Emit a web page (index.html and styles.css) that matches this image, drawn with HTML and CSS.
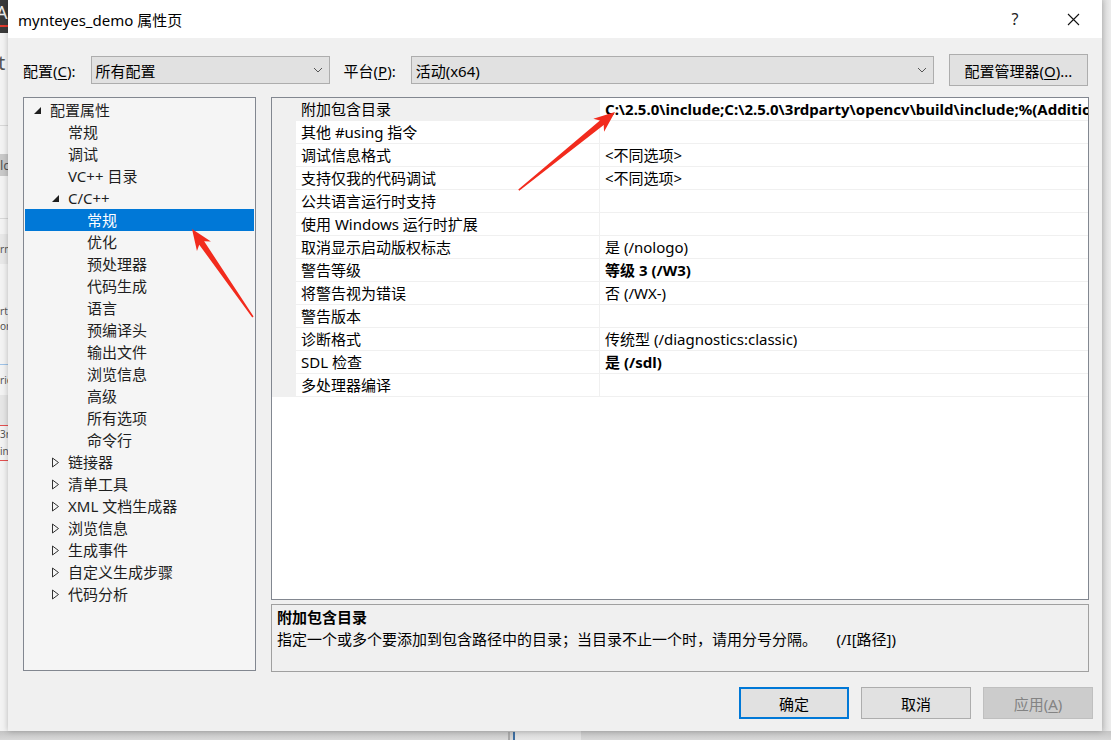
FILE: index.html
```html
<!DOCTYPE html>
<html lang="zh-CN">
<head>
    <meta charset="UTF-8">
    <title>mynteyes_demo 属性页</title>
    <link rel="stylesheet" href="styles.css">
</head>
<body>

<div class="desk">
    <div class="backwin">
        <div class="bw-top">A</div>
        <div class="bw-red"></div>
        <div class="bw-dark"></div>
        <div class="bw-pane">t</div>
        <div class="bw-line"></div>
        <div class="bw-sel">lc</div>
        <div class="bw-gap"></div>
        <div class="bw-line"></div>
        <div class="bw-band">rm</div>
        <div class="bw-gap2">rt<br>on</div>
        <div class="bw-blue">rie</div>
        <div class="bw-band2"></div>
        <div class="bw-redbox">3r<br>ine</div>
        <div class="bw-rest"></div>
    </div>

    <div class="dialog">
        <div class="titlebar">
            <span class="title">mynteyes_demo 属性页</span>
            <span class="tb-btn">?</span>
            <span class="tb-btn">
                <svg width="13" height="13" viewBox="0 0 13 13"><path d="M1 1 L12 12 M12 1 L1 12" stroke="#111" stroke-width="1.1" fill="none"/></svg>
            </span>
        </div>

        <div class="toolbar">
            <span class="lbl">配置(<u>C</u>):</span>
            <div class="combo combo-config">
                <span>所有配置</span>
                <svg class="chev" width="10" height="6" viewBox="0 0 10 6"><polyline points="1,1 5,5 9,1" fill="none" stroke="#555" stroke-width="1"/></svg>
            </div>
            <span class="lbl lbl-platform">平台(<u>P</u>):</span>
            <div class="combo combo-platform">
                <span>活动(x64)</span>
                <svg class="chev" width="10" height="6" viewBox="0 0 10 6"><polyline points="1,1 5,5 9,1" fill="none" stroke="#555" stroke-width="1"/></svg>
            </div>
            <button class="btn btn-mgr">配置管理器(<u>O</u>)...</button>
        </div>

        <div class="main">
            <div class="tree">
                <div class="node l0"><span class="twisty"><svg width="9" height="9" viewBox="0 0 9 9"><polygon points="8,1 8,8 1,8" fill="#1e1e1e"/></svg></span>配置属性</div>
                <div class="node l1"><span class="twisty"></span>常规</div>
                <div class="node l1"><span class="twisty"></span>调试</div>
                <div class="node l1"><span class="twisty"></span>VC++ 目录</div>
                <div class="node l1"><span class="twisty"><svg width="9" height="9" viewBox="0 0 9 9"><polygon points="8,1 8,8 1,8" fill="#1e1e1e"/></svg></span>C/C++</div>
                <div class="node l2 selected"><span class="twisty"></span>常规</div>
                <div class="node l2"><span class="twisty"></span>优化</div>
                <div class="node l2"><span class="twisty"></span>预处理器</div>
                <div class="node l2"><span class="twisty"></span>代码生成</div>
                <div class="node l2"><span class="twisty"></span>语言</div>
                <div class="node l2"><span class="twisty"></span>预编译头</div>
                <div class="node l2"><span class="twisty"></span>输出文件</div>
                <div class="node l2"><span class="twisty"></span>浏览信息</div>
                <div class="node l2"><span class="twisty"></span>高级</div>
                <div class="node l2"><span class="twisty"></span>所有选项</div>
                <div class="node l2"><span class="twisty"></span>命令行</div>
                <div class="node l1"><span class="twisty"><svg width="9" height="11" viewBox="0 0 9 11"><polygon points="1.5,1 7.5,5.5 1.5,10" fill="none" stroke="#333" stroke-width="1"/></svg></span>链接器</div>
                <div class="node l1"><span class="twisty"><svg width="9" height="11" viewBox="0 0 9 11"><polygon points="1.5,1 7.5,5.5 1.5,10" fill="none" stroke="#333" stroke-width="1"/></svg></span>清单工具</div>
                <div class="node l1"><span class="twisty"><svg width="9" height="11" viewBox="0 0 9 11"><polygon points="1.5,1 7.5,5.5 1.5,10" fill="none" stroke="#333" stroke-width="1"/></svg></span>XML 文档生成器</div>
                <div class="node l1"><span class="twisty"><svg width="9" height="11" viewBox="0 0 9 11"><polygon points="1.5,1 7.5,5.5 1.5,10" fill="none" stroke="#333" stroke-width="1"/></svg></span>浏览信息</div>
                <div class="node l1"><span class="twisty"><svg width="9" height="11" viewBox="0 0 9 11"><polygon points="1.5,1 7.5,5.5 1.5,10" fill="none" stroke="#333" stroke-width="1"/></svg></span>生成事件</div>
                <div class="node l1"><span class="twisty"><svg width="9" height="11" viewBox="0 0 9 11"><polygon points="1.5,1 7.5,5.5 1.5,10" fill="none" stroke="#333" stroke-width="1"/></svg></span>自定义生成步骤</div>
                <div class="node l1"><span class="twisty"><svg width="9" height="11" viewBox="0 0 9 11"><polygon points="1.5,1 7.5,5.5 1.5,10" fill="none" stroke="#333" stroke-width="1"/></svg></span>代码分析</div>
            </div>

            <div class="right">
                <div class="grid">
                    <div class="row current"><span class="gut"></span><span class="name">附加包含目录</span><span class="val bold">C:\2.5.0\include;C:\2.5.0\3rdparty\opencv\build\include;%(AdditionalIncludeDirectories)</span></div>
                    <div class="row"><span class="gut"></span><span class="name">其他 #using 指令</span><span class="val"></span></div>
                    <div class="row"><span class="gut"></span><span class="name">调试信息格式</span><span class="val">&lt;不同选项&gt;</span></div>
                    <div class="row"><span class="gut"></span><span class="name">支持仅我的代码调试</span><span class="val">&lt;不同选项&gt;</span></div>
                    <div class="row"><span class="gut"></span><span class="name">公共语言运行时支持</span><span class="val"></span></div>
                    <div class="row"><span class="gut"></span><span class="name">使用 Windows 运行时扩展</span><span class="val"></span></div>
                    <div class="row"><span class="gut"></span><span class="name">取消显示启动版权标志</span><span class="val">是 (/nologo)</span></div>
                    <div class="row"><span class="gut"></span><span class="name">警告等级</span><span class="val bold">等级 3 (/W3)</span></div>
                    <div class="row"><span class="gut"></span><span class="name">将警告视为错误</span><span class="val">否 (/WX-)</span></div>
                    <div class="row"><span class="gut"></span><span class="name">警告版本</span><span class="val"></span></div>
                    <div class="row"><span class="gut"></span><span class="name">诊断格式</span><span class="val">传统型 (/diagnostics:classic)</span></div>
                    <div class="row"><span class="gut"></span><span class="name">SDL 检查</span><span class="val bold">是 (/sdl)</span></div>
                    <div class="row"><span class="gut"></span><span class="name">多处理器编译</span><span class="val"></span></div>
                </div>
                <div class="desc">
                    <div class="desc-title">附加包含目录</div>
                    <div class="desc-text">指定一个或多个要添加到包含路径中的目录；当目录不止一个时，请用分号分隔。&nbsp;&nbsp;&nbsp;&nbsp;&nbsp;(/I[路径])</div>
                </div>
            </div>
        </div>

        <div class="footer">
            <button class="btn btn-ok">确定</button>
            <button class="btn">取消</button>
            <button class="btn btn-disabled">应用(<u>A</u>)</button>
        </div>
    </div>

    <div class="rshadow"></div>
</div>
<div class="floor">
    <div class="floor-a"></div>
    <div class="floor-b"></div>
    <div class="floor-c"></div>
</div>

<svg class="arrows" width="1111" height="740" viewBox="0 0 1111 740">
    <polygon transform="translate(192,229) rotate(55.3)" points="0,0 21,-8.5 17,-3 107,-0.8 107,0.8 17,3 21,8.5" fill="#f22b1d"/>
    <polygon transform="translate(615,112) rotate(140.9)" points="0,0 21,-8.5 17,-3 124,-0.8 124,0.8 17,3 21,8.5" fill="#f22b1d"/>
</svg>

</body>
</html>
```

FILE: styles.css
```css
body {
    margin: 0;
    width: 1111px;
    height: 740px;
    overflow: hidden;
    background-color: #d6d6d6;
    font-family: "Noto Sans", "Noto Sans CJK SC", sans-serif;
    font-size: 15px;
    color: #000;
    position: relative;
}
.desk {
    display: flex;
    height: 731px;
}

/* window behind the dialog */
.backwin {
    width: 8px;
    overflow: hidden;
    background-color: #f3f3f3;
    font-size: 13px;
    line-height: 13px;
    color: #555;
    white-space: nowrap;
}
.bw-top {
    height: 25px;
    background-color: #3a3a3a;
    color: #eee;
    font-size: 18px;
    line-height: 25px;
    text-indent: -4px;
}
.bw-red { height: 2px; background-color: #e03a2e; }
.bw-dark { height: 6px; background-color: #3a3a3a; }
.bw-pane {
    height: 92px;
    font-size: 20px;
    line-height: 60px;
    text-indent: -2px;
}
.bw-line { height: 1px; background-color: #d8d8d8; }
.bw-sel {
    height: 22px;
    margin-top: 28px;
    background-color: #c9c9c9;
    line-height: 22px;
}
.bw-gap { height: 42px; }
.bw-band {
    height: 30px;
    margin-top: 15px;
    background-color: #e8e8e8;
    line-height: 30px;
    font-size: 10px;
}
.bw-gap2 {
    height: 60px;
    padding-top: 40px;
    font-size: 10px;
    line-height: 15px;
}
.bw-blue {
    height: 30px;
    border-top: 1px solid #9ec3e8;
    font-size: 10px;
    line-height: 30px;
}
.bw-band2 { height: 30px; background-color: #e6e6e6; }
.bw-redbox {
    height: 34px;
    border-top: 1px solid #e35050;
    border-bottom: 1px solid #e35050;
    font-size: 10px;
    line-height: 17px;
}
.bw-rest { height: 200px; }

/* dialog */
.dialog {
    width: 1094px;
    height: 731px;
    background-color: #f0f0f0;
    display: flex;
    flex-direction: column;
    box-shadow: 0 0 6px rgba(0, 0, 0, 0.25);
    position: relative;
    z-index: 1;
}
.rshadow {
    flex: 1;
    background: linear-gradient(to right, #d9d9d9, #ececec);
}
.floor {
    height: 9px;
    display: flex;
    background: linear-gradient(#c4c4c4, #d8d8d8);
}
.floor-a { width: 508px; }
.floor-b {
    width: 3px;
    margin-top: 1px;
    border-left: 2px solid #a8a8a8;
    border-right: 2px solid #3d6da0;
}
.floor-c {
    width: 66px;
    background: linear-gradient(#d8d8d8, #e6e6e6);
}

.titlebar {
    height: 38px;
    background-color: #fff;
    display: flex;
    align-items: center;
    padding-left: 10px;
}
.title {
    flex: 1;
    font-size: 15px;
}
.tb-btn {
    width: 58px;
    height: 38px;
    display: flex;
    align-items: center;
    justify-content: center;
    font-size: 16px;
    color: #222;
}

.toolbar {
    display: flex;
    align-items: center;
    height: 32px;
    margin-top: 16px;
    padding: 0 14px 0 15px;
}
.lbl {
    white-space: nowrap;
}
.lbl u, .btn u {
    text-decoration-thickness: 1px;
    text-underline-offset: 2px;
}
.lbl-platform {
    margin-left: 14px;
}
.combo {
    height: 28px;
    box-sizing: border-box;
    border: 1px solid #adadad;
    background-color: #e1e1e1;
    display: flex;
    align-items: center;
    padding: 0 6px 0 4px;
    margin-left: 15px;
}
.combo .chev {
    margin-left: auto;
}
.combo-config {
    width: 239px;
}
.combo-platform {
    flex: 1;
}
.btn {
    height: 32px;
    width: 110px;
    box-sizing: border-box;
    border: 1px solid #adadad;
    background-color: #e1e1e1;
    font-family: inherit;
    font-size: 15px;
    color: #000;
    padding: 0;
}
.btn-mgr {
    width: 139px;
    margin-left: 15px;
}

.main {
    display: flex;
    gap: 15px;
    height: 575px;
    margin-top: 11px;
    padding: 0 13px 0 15px;
}

/* tree */
.tree {
    width: 233px;
    height: 574px;
    box-sizing: border-box;
    border: 1px solid #828790;
    background-color: #f5f5f5;
    padding: 1px;
    color: #1e1e1e;
}
.node {
    height: 22px;
    line-height: 22px;
    display: flex;
    align-items: center;
    white-space: nowrap;
}
.node.l0 { padding-left: 8px; }
.node.l1 { padding-left: 26px; }
.node.l2 { padding-left: 45px; }
.twisty {
    width: 17px;
    height: 22px;
    display: flex;
    align-items: center;
    flex-shrink: 0;
}
.node.selected {
    background-color: #0078d7;
    color: #fff;
}

/* property grid */
.right {
    flex: 1;
    display: flex;
    flex-direction: column;
    gap: 4px;
}
.grid {
    height: 503px;
    box-sizing: border-box;
    border: 1px solid #828790;
    background-color: #fff;
}
.row {
    display: grid;
    grid-template-columns: 24px 304px 1fr;
    height: 23px;
    line-height: 22px;
}
.gut {
    background-color: #f0f0f0;
}
.name, .val {
    box-sizing: border-box;
    border-bottom: 1px solid #f0f0f0;
    white-space: nowrap;
    overflow: hidden;
}
.name {
    padding-left: 5px;
    border-right: 1px solid #f0f0f0;
}
.val {
    padding-left: 5px;
}
.row.current .name {
    background-color: #f0f0f0;
}
.bold {
    font-weight: bold;
}

.desc {
    height: 68px;
    box-sizing: border-box;
    border: 1px solid #a0a0a0;
    background-color: #f0f0f0;
    padding: 1px 5px 0;
    line-height: 22px;
}
.desc-title {
    font-weight: bold;
}
.desc-text {
    white-space: nowrap;
}

/* bottom buttons */
.footer {
    display: flex;
    justify-content: flex-end;
    gap: 12px;
    padding: 15px 9px 0 0;
}
.btn-ok {
    border: 2px solid #0078d7;
}
.btn-disabled {
    background-color: #cccccc;
    border-color: #bfbfbf;
    color: #838383;
}

.arrows {
    position: absolute;
    top: 0;
    left: 0;
    z-index: 5;
    pointer-events: none;
}
```
